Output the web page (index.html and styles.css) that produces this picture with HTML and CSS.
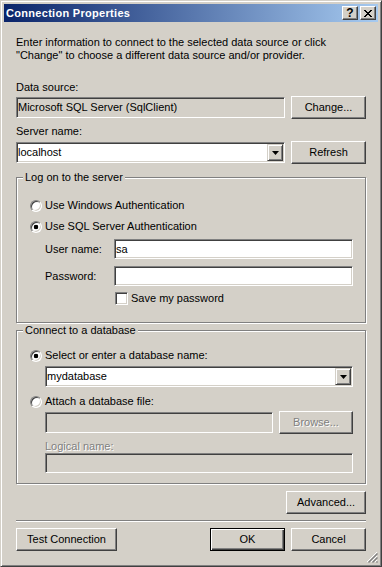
FILE: index.html
```html
<!DOCTYPE html>
<html>
<head>
<meta charset="utf-8">
<title>Connection Properties</title>
<link rel="stylesheet" href="styles.css">
</head>
<body>
<div class="window">
  <div class="titlebar">
    <span class="title">Connection Properties</span>
    <div class="caption-btns">
      <span class="cbtn help">?</span>
      <span class="cbtn close"><svg width="8" height="7" viewBox="0 0 8 7"><path d="M0 0h2v1h-2zM6 0h2v1h-2zM1 1h2v1h-2zM5 1h2v1h-2zM2 2h4v1h-4zM3 3h2v1h-2zM2 4h4v1h-4zM1 5h2v1h-2zM5 5h2v1h-2zM0 6h2v1h-2zM6 6h2v1h-2z" fill="#000"/></svg></span>
    </div>
  </div>
  <div class="content">
    <p class="intro">Enter information to connect to the selected data source or click<br>"Change" to choose a different data source and/or provider.</p>

    <div class="label ds-label">Data source:</div>
    <div class="row row-ds">
      <div class="textbox readonly tall">Microsoft SQL Server (SqlClient)</div>
      <button class="btn">Change...</button>
    </div>

    <div class="label sn-label">Server name:</div>
    <div class="row row-sn">
      <div class="combo tall"><span class="combo-text">localhost</span><span class="dd"><svg width="7" height="4" viewBox="0 0 7 4"><path d="M0 0h7l-3.5 4z" fill="#000"/></svg></span></div>
      <button class="btn">Refresh</button>
    </div>

    <div class="group g-logon">
      <div class="legend"><span>Log on to the server</span></div>
      <div class="opt opt-win"><span class="radio"></span>Use Windows Authentication</div>
      <div class="opt opt-sql"><span class="radio on"></span>Use SQL Server Authentication</div>
      <div class="field f-user"><span class="flabel">User name:</span><div class="textbox">sa</div></div>
      <div class="field f-pass"><span class="flabel">Password:</span><div class="textbox"></div></div>
      <div class="chk-row"><span class="check"></span>Save my password</div>
    </div>

    <div class="group g-db">
      <div class="legend"><span>Connect to a database</span></div>
      <div class="opt opt-sel"><span class="radio on"></span>Select or enter a database name:</div>
      <div class="combo tall db-combo"><span class="combo-text">mydatabase</span><span class="dd"><svg width="7" height="4" viewBox="0 0 7 4"><path d="M0 0h7l-3.5 4z" fill="#000"/></svg></span></div>
      <div class="opt opt-att"><span class="radio"></span>Attach a database file:</div>
      <div class="row file-row">
        <div class="textbox disabled tall"></div>
        <button class="btn browse" disabled>Browse...</button>
      </div>
      <div class="label disabled-text logical">Logical name:</div>
      <div class="textbox disabled logical-box"></div>
    </div>

    <button class="btn advanced">Advanced...</button>
    <div class="separator"></div>
    <div class="footer">
      <button class="btn test">Test Connection</button>
      <div class="spacer"></div>
      <button class="btn default">OK</button>
      <button class="btn">Cancel</button>
    </div>
  </div>
  <svg class="grip" width="12" height="12" viewBox="0 0 12 12">
    <path d="M11 1L1 11M11 5L5 11M11 9L9 11" stroke="#fff" stroke-width="1"/>
    <path d="M11.5 2.5L2.5 11.5M11.5 6.5L6.5 11.5M11.5 10.5L10.5 11.5" stroke="#808080" stroke-width="1.4"/>
  </svg>
</div>
</body>
</html>
```

FILE: styles.css
```css
* { box-sizing: border-box; }
html, body { margin: 0; padding: 0; background: #d4d0c8; }
body {
  font-family: Tahoma, "Liberation Sans", Arial, sans-serif;
  font-size: 11px;
  line-height: 13px;
  color: #000;
}
.window {
  width: 382px;
  height: 567px;
  border: 1px solid;
  border-color: #d4d0c8 #404040 #404040 #d4d0c8;
  box-shadow: inset 1px 1px #fff, inset -1px -1px #808080;
  padding: 3px;
  display: flex;
  flex-direction: column;
  position: relative;
  background: #d4d0c8;
}
.titlebar {
  height: 18px;
  flex: none;
  background: linear-gradient(to right, #0a246a, #a6caf0);
  display: flex;
  align-items: center;
  padding: 0 2px;
  color: #fff;
  font-weight: bold;
}
.title { flex: 1; letter-spacing: 0.3px; }
.caption-btns { display: flex; gap: 2px; }
.cbtn {
  width: 16px;
  height: 14px;
  background: #d4d0c8;
  border: 1px solid;
  border-color: #fff #404040 #404040 #fff;
  box-shadow: inset -1px -1px #808080;
  display: flex;
  align-items: center;
  justify-content: center;
  color: #000;
  font-weight: bold;
  font-size: 12px;
  line-height: 12px;
}
.content {
  padding: 0 12px;
  display: flex;
  flex-direction: column;
}
.intro { margin: 14px 0 0; }
.label { height: 13px; }
.ds-label { margin-top: 19px; }
.row { display: flex; align-items: center; gap: 6px; height: 23px; }
.row-ds { margin-top: 2px; }
.sn-label { margin-top: 6px; }
.row-sn { margin-top: 3px; }

.btn {
  font: inherit;
  color: #000;
  width: 75px;
  height: 23px;
  flex: none;
  padding: 0;
  margin: 0;
  background: #d4d0c8;
  border: 1px solid;
  border-color: #fff #404040 #404040 #fff;
  box-shadow: inset -1px -1px #808080;
  border-radius: 0;
  text-align: center;
}
.btn.default {
  border-color: #000;
  box-shadow: inset 1px 1px #fff, inset -1px -1px #404040, inset -2px -2px #808080;
}
.btn.browse, .disabled-text {
  color: #808080;
  text-shadow: 1px 1px #fff;
}
.textbox, .combo {
  height: 20px;
  background: #fff;
  border: 1px solid;
  border-color: #808080 #fff #fff #808080;
  box-shadow: inset 1px 1px #404040, inset -1px -1px #d4d0c8;
  padding: 0 1px;
  display: flex;
  align-items: center;
  white-space: nowrap;
  overflow: hidden;
}
.textbox.tall, .combo.tall { height: 21px; }
.row .textbox, .row .combo { flex: 1; }
.textbox.readonly, .textbox.disabled { background: #d4d0c8; }
.combo { padding: 1px; }
.combo-text { flex: 1; padding-left: 0; }
.dd {
  width: 16px;
  height: 17px;
  flex: none;
  background: #d4d0c8;
  border: 1px solid;
  border-color: #d4d0c8 #404040 #404040 #d4d0c8;
  box-shadow: inset 1px 1px #fff, inset -1px -1px #808080;
  display: flex;
  align-items: center;
  justify-content: center;
}
.dd svg { display: block; margin-top: 1px; }

.group {
  border: 1px solid #808080;
  box-shadow: inset 1px 1px #fff, 1px 1px #fff;
  display: flex;
  flex-direction: column;
}
.g-logon { margin-top: 13px; padding-bottom: 17px; }
.g-db { margin-top: 7px; padding-bottom: 10px; }
.legend { margin: -7px 0 0 6px; height: 13px; }
.legend span {
  display: inline-block;
  height: 13px;
  background: #d4d0c8;
  padding: 0 2px;
}
.opt {
  display: flex;
  align-items: center;
  gap: 3px;
  height: 13px;
  margin-left: 13px;
}
.radio {
  width: 12px;
  height: 12px;
  flex: none;
  border-radius: 50%;
  border: 1px solid;
  border-color: #808080 #fff #fff #808080;
  box-shadow: inset 1px 1px #404040, inset -1px -1px #d4d0c8;
  background: #fff;
}
.radio.on { background: radial-gradient(circle at center, #000 0 2px, #fff 2.6px); }
.opt-win { margin-top: 15px; }
.opt-sql { margin-top: 8px; }
.field {
  display: flex;
  align-items: center;
  margin: 0 12px 0 28px;
}
.flabel { width: 69px; flex: none; }
.field .textbox { flex: 1; }
.f-user { margin-top: 6px; }
.f-pass { margin-top: 7px; }
.chk-row {
  display: flex;
  align-items: center;
  gap: 3px;
  height: 13px;
  margin: 6px 0 0 98px;
}
.check {
  width: 13px;
  height: 13px;
  flex: none;
  background: #fff;
  border: 1px solid;
  border-color: #808080 #fff #fff #808080;
  box-shadow: inset 1px 1px #404040, inset -1px -1px #d4d0c8;
}
.opt-sel { margin-top: 12px; }
.db-combo { margin: 4px 12px 0 28px; }
.opt-att { margin-top: 8px; }
.file-row { margin: 3px 12px 0 28px; }
.browse { width: 74px; }
.logical { margin: 6px 0 0 28px; }
.logical-box { margin: 0 12px 0 28px; }

.advanced { align-self: flex-end; width: 80px; margin-top: 7px; }
.separator {
  margin-top: 6px;
  height: 2px;
  border-top: 1px solid #808080;
  border-bottom: 1px solid #fff;
}
.footer { display: flex; gap: 6px; margin-top: 6px; }
.spacer { flex: 1; }
.test { width: 101px; }
.grip { position: absolute; right: 3px; bottom: 3px; }
```
